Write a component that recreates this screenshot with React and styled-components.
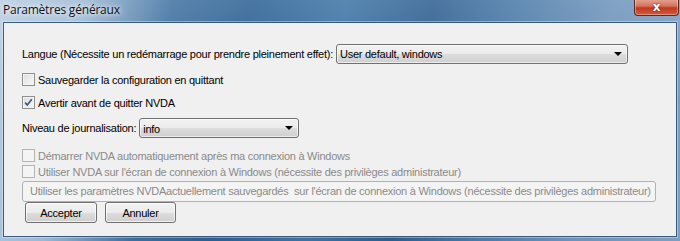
import React from "react";
import styled, { createGlobalStyle } from "styled-components";

const Global = createGlobalStyle`
  html, body { margin: 0; padding: 0; }
  body { width: 680px; height: 241px; overflow: hidden; }
`;

const Frame = styled.div`
  width: 680px;
  height: 241px;
  box-sizing: border-box;
  display: flex;
  flex-direction: column;
  padding: 0 3px 4px 3px;
  background:
    linear-gradient(180deg, rgba(255,255,255,0.15) 0%, rgba(255,255,255,0) 40%),
    linear-gradient(100deg, #b8cde2 0%, #9ab7d4 12%, #3d6f9f 24%, #2a5f93 35%, #3c73a5 48%, #2c5d8f 60%, #4a7aa8 72%, #6d93ba 85%, #7f9fc2 100%);
  font-family: "Liberation Sans", Arial, sans-serif;
`;

const TitleBar = styled.div`
  height: 22px;
  display: flex;
  align-items: flex-start;
  justify-content: space-between;
`;

const Title = styled.div`
  font-family: "Open Sans", "Noto Sans", sans-serif;
  font-size: 12px;
  color: #111;
  padding-top: 1px;
  letter-spacing: -0.2px;
  text-shadow: 0 0 8px rgba(255,255,255,0.9), 0 0 4px rgba(255,255,255,0.9);
`;

const CloseBtn = styled.div`
  width: 45px;
  height: 17px;
  margin-top: -1px;
  margin-right: -2px;
  box-sizing: border-box;
  border: 1px solid #5a2a26;
  border-top: none;
  border-radius: 0 0 4px 4px;
  background: linear-gradient(180deg, #e8a493 0%, #d3715c 45%, #c2391f 55%, #d25a3c 100%);
  box-shadow: inset 0 0 0 1px rgba(255,255,255,0.35);
  display: flex;
  align-items: center;
  justify-content: center;
  color: #fff;
  font-family: "DejaVu Sans", sans-serif;
  font-weight: bold;
  font-size: 12px;
  line-height: 1;
  text-shadow: 0 0 2px #5a1a10;
`;

const Client = styled.div`
  flex: 1;
  background: #f0f0f0;
  border: 1px solid #3b5b7e;
  box-shadow: 0 0 0 1px rgba(255,255,255,0.35);
  padding: 21px 0 0 18px;
  display: flex;
  flex-direction: column;
  font-size: 11px;
  color: #000;
`;

const Row = styled.div`
  display: flex;
  align-items: center;
  height: ${(p) => p.h || 20}px;
  margin-top: ${(p) => p.mt || 0}px;
`;

const Label = styled.span`
  font-family: "Liberation Sans", Arial, sans-serif;
  font-size: 11px;
  letter-spacing: -0.25px;
  white-space: nowrap;
  color: ${(p) => (p.disabled ? "#8a8a8a" : "#000")};
`;

const Combo = styled.div`
  width: ${(p) => p.w}px;
  height: 20px;
  box-sizing: border-box;
  margin-left: 3px;
  border: 1px solid #707070;
  border-radius: 3px;
  background: linear-gradient(180deg, #f2f2f2 0%, #ebebeb 50%, #dddddd 51%, #cfcfcf 100%);
  box-shadow: inset 0 0 0 1px rgba(255,255,255,0.6);
  display: flex;
  align-items: center;
  padding: 0 4px 0 3px;
`;

const ComboText = styled.span`
  flex: 1;
  font-family: "Liberation Sans", Arial, sans-serif;
  font-size: 11px;
  letter-spacing: -0.25px;
  color: #000;
  margin-top: ${(p) => p.mt || 0}px;
`;

const Arrow = styled.span`
  width: 0;
  height: 0;
  border-left: 4px solid transparent;
  border-right: 4px solid transparent;
  border-top: 4px solid #000;
  margin-right: 1px;
`;

const Box = styled.span`
  width: 13px;
  height: 13px;
  box-sizing: border-box;
  border: 1px solid ${(p) => (p.disabled ? "#b4b4b4" : "#8e8f8f")};
  background: ${(p) =>
    p.disabled
      ? "#f4f4f4"
      : "linear-gradient(135deg, #dcdcdc 0%, #eeeeee 60%, #f6f6f6 100%)"};
  box-shadow: inset 0 0 0 1px #f4f4f4;
  margin-right: 3px;
  display: inline-flex;
  align-items: center;
  justify-content: center;
  flex-shrink: 0;
`;

const Check = () => (
  <svg width="9" height="9" viewBox="0 0 9 9">
    <path d="M1.2 4.6 L3.3 7 L7.8 1.2" fill="none" stroke="#3b4f8c" strokeWidth="1.6" />
  </svg>
);

const Btn = styled.div`
  width: ${(p) => p.w}px;
  height: 21px;
  box-sizing: border-box;
  margin-left: ${(p) => p.ml || 0}px;
  margin-right: 8px;
  border: 1px solid ${(p) => (p.disabled ? "#adb2b5" : "#707070")};
  border-radius: 3px;
  background: ${(p) =>
    p.disabled
      ? "#f4f4f4"
      : "linear-gradient(180deg, #f2f2f2 0%, #ebebeb 50%, #dddddd 51%, #cfcfcf 100%)"};
  box-shadow: inset 0 0 0 1px ${(p) => (p.disabled ? "#f4f4f4" : "rgba(255,255,255,0.7)")};
  display: flex;
  align-items: center;
  justify-content: ${(p) => (p.left ? "flex-start" : "center")};
  padding-left: ${(p) => (p.left ? 7 : 0)}px;
  font-family: "Liberation Sans", Arial, sans-serif;
  font-size: 11px;
  letter-spacing: -0.25px;
  color: ${(p) => (p.disabled ? "#8a8a8a" : "#000")};
  white-space: nowrap;
`;

export default function App() {
  return (
    <>
      <Global />
      <Frame>
        <TitleBar>
          <Title>Paramètres généraux</Title>
          <CloseBtn>x</CloseBtn>
        </TitleBar>
        <Client>
          <Row h={20}>
            <Label>Langue (Nécessite un redémarrage pour prendre pleinement effet):</Label>
            <Combo w={292}>
              <ComboText>User default, windows</ComboText>
              <Arrow />
            </Combo>
          </Row>
          <Row h={13} mt={9}>
            <Box />
            <Label>Sauvegarder la configuration en quittant</Label>
          </Row>
          <Row h={13} mt={10}>
            <Box>
              <Check />
            </Box>
            <Label>Avertir avant de quitter NVDA</Label>
          </Row>
          <Row h={20} mt={9}>
            <Label>Niveau de journalisation:</Label>
            <Combo w={160}>
              <ComboText mt={2}>info</ComboText>
              <Arrow />
            </Combo>
          </Row>
          <Row h={13} mt={11}>
            <Box disabled />
            <Label disabled>Démarrer NVDA automatiquement après ma connexion à Windows</Label>
          </Row>
          <Row h={13} mt={3}>
            <Box disabled />
            <Label disabled>Utiliser NVDA sur l'écran de connexion à Windows (nécessite des privilèges administrateur)</Label>
          </Row>
          <Row h={20} mt={3}>
            <Btn disabled left w={634}>
              Utiliser les paramètres NVDAactuellement sauvegardés&nbsp; sur l'écran de connexion à Windows (nécessite des privilèges administrateur)
            </Btn>
          </Row>
          <Row h={21} mt={1}>
            <Btn w={72} ml={3}>Accepter</Btn>
            <Btn w={71}>Annuler</Btn>
          </Row>
        </Client>
      </Frame>
    </>
  );
}
